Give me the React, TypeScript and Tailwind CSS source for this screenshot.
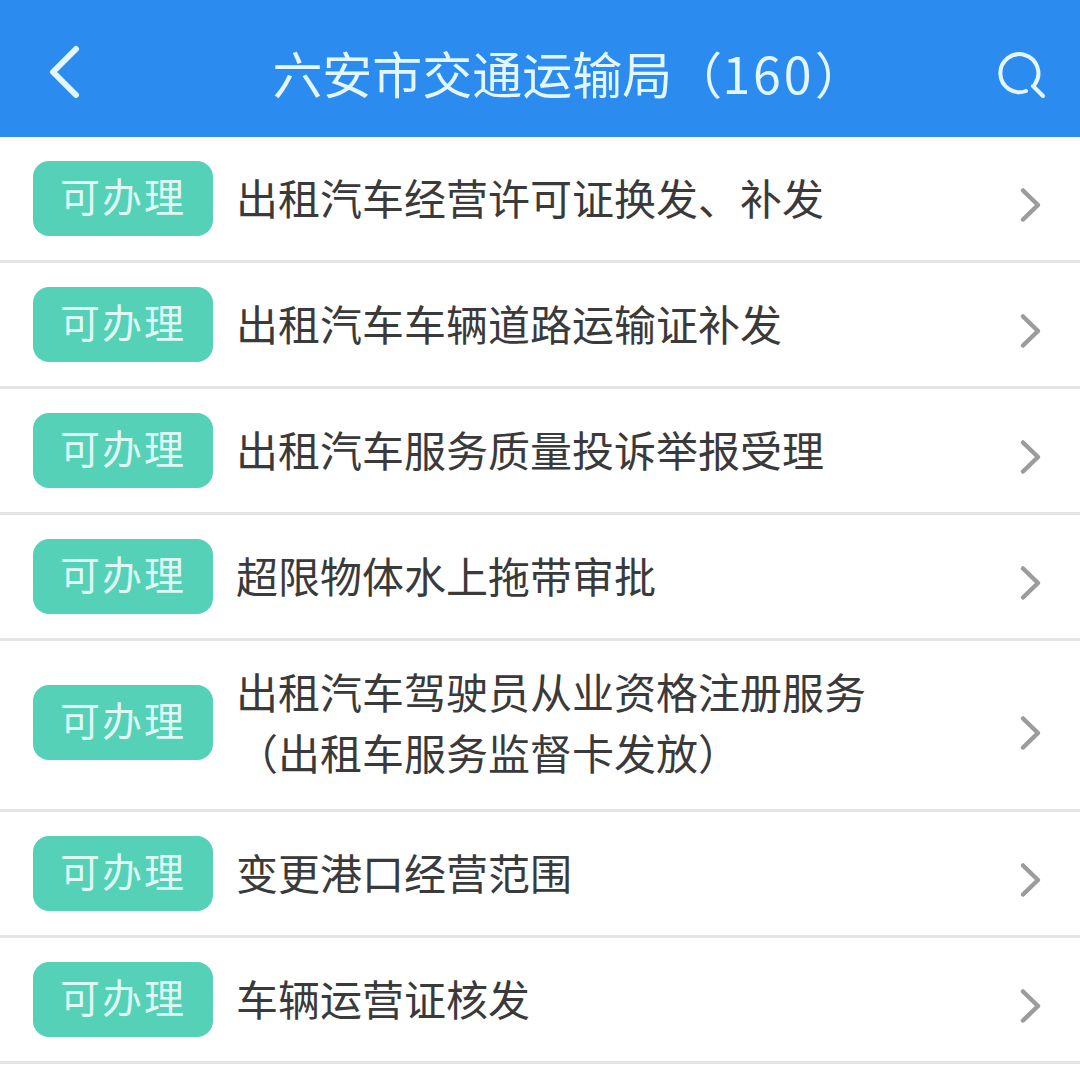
const rows = [
  { lines: ["出租汽车经营许可证换发、补发"] },
  { lines: ["出租汽车车辆道路运输证补发"] },
  { lines: ["出租汽车服务质量投诉举报受理"] },
  { lines: ["超限物体水上拖带审批"] },
  { lines: ["出租汽车驾驶员从业资格注册服务", "（出租车服务监督卡发放）"], tall: true },
  { lines: ["变更港口经营范围"] },
  { lines: ["车辆运营证核发"] },
];

export default function App() {
  return (
    <div className="h-[1078px] w-[1080px] overflow-hidden bg-white font-['Noto_Sans_CJK_SC','Liberation_Sans',sans-serif]">
      <header className="flex h-[137px] items-center justify-between bg-[#2b8bee] pl-[44px] pr-[32px] pt-[6px] text-[#e4f6fd]">
        <svg width="40" height="54" viewBox="0 0 40 54" fill="none" stroke="currentColor" strokeWidth="6" strokeLinecap="round" strokeLinejoin="round">
          <path d="M32 4 L9 27 L32 50" />
        </svg>
        <h1 className="ml-[55px] text-[50px] leading-none">
          六安市交通运输局（<span className="tracking-[3px]">160</span>）
        </h1>
        <svg width="50" height="52" viewBox="0 0 50 52" fill="none" stroke="currentColor" strokeWidth="4" strokeLinecap="round">
          <path d="M28 45 A19 19 0 1 1 37 38" />
          <path d="M35 40 L45 50" />
        </svg>
      </header>
      {rows.map((row) => (
        <div
          key={row.lines[0]}
          className={row.tall
            ? "flex h-[171px] items-center border-b-[3px] border-[#e3e4e6] pl-[33px] pr-[38px]"
            : "flex h-[126px] items-center border-b-[3px] border-[#e3e4e6] pl-[33px] pr-[38px]"}
        >
          <span className={row.tall
            ? "mb-[6px] flex h-[75px] w-[180px] shrink-0 items-center justify-center rounded-[16px] bg-[#54d1b6] pb-[6px] text-[40px] leading-none tracking-[2px] text-[#dff8f4]"
            : "mb-[1px] flex h-[75px] w-[180px] shrink-0 items-center justify-center rounded-[16px] bg-[#54d1b6] pb-[6px] text-[40px] leading-none tracking-[2px] text-[#dff8f4]"}>
            可办理
          </span>
          <div className={row.tall ? "mb-[9px] ml-[23px] flex-1 text-[#3a3a3a]" : "mb-[4px] ml-[23px] flex-1 text-[#3a3a3a]"}>
            {row.lines.map((line) => (
              <p key={line} className="text-[42px] leading-[61px]">{line}</p>
            ))}
          </div>
          <svg
            className={row.tall ? "mt-[16px]" : "mt-[12px]"}
            width="24"
            height="36"
            viewBox="0 0 24 36"
            fill="none"
            stroke="#9c9c9c"
            strokeWidth="4.5"
            strokeLinecap="round"
            strokeLinejoin="round"
          >
            <path d="M5 3.5 L20 18 L5 32.5" />
          </svg>
        </div>
      ))}
    </div>
  );
}
